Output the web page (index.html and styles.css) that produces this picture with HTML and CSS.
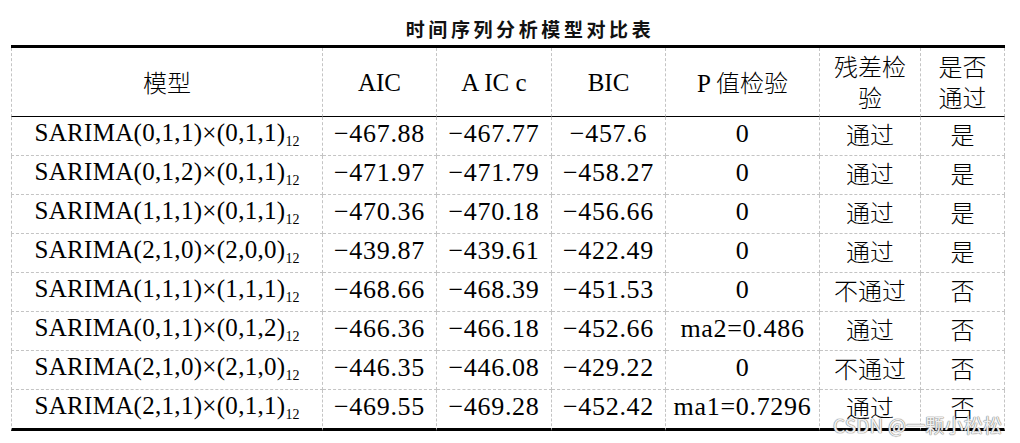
FILE: index.html
```html
<!DOCTYPE html>
<html lang="zh">
<head>
<meta charset="utf-8">
<title>时间序列分析模型对比表</title>
<link rel="stylesheet" href="styles.css">
</head>
<body>
<div class="page">
  <h1 class="title">时间序列分析模型对比表</h1>
  <table class="cmp">
    <thead>
      <tr>
        <th class="c-model"><span class="cjk">模型</span></th>
        <th class="c-aic">AIC</th>
        <th class="c-aicc">A IC c</th>
        <th class="c-bic">BIC</th>
        <th class="c-p">P <span class="cjk">值检验</span></th>
        <th class="c-res"><span class="cjk">残差检<br>验</span></th>
        <th class="c-pass"><span class="cjk">是否<br>通过</span></th>
      </tr>
    </thead>
    <tbody>
      <tr>
        <td class="model">SARIMA(0,1,1)×(0,1,1)<span class="sub">12</span></td>
        <td class="num">−467.88</td><td class="num">−467.77</td><td class="num">−457.6</td>
        <td class="num">0</td><td class="cjk">通过</td><td class="cjk">是</td>
      </tr>
      <tr>
        <td class="model">SARIMA(0,1,2)×(0,1,1)<span class="sub">12</span></td>
        <td class="num">−471.97</td><td class="num">−471.79</td><td class="num">−458.27</td>
        <td class="num">0</td><td class="cjk">通过</td><td class="cjk">是</td>
      </tr>
      <tr>
        <td class="model">SARIMA(1,1,1)×(0,1,1)<span class="sub">12</span></td>
        <td class="num">−470.36</td><td class="num">−470.18</td><td class="num">−456.66</td>
        <td class="num">0</td><td class="cjk">通过</td><td class="cjk">是</td>
      </tr>
      <tr>
        <td class="model">SARIMA(2,1,0)×(2,0,0)<span class="sub">12</span></td>
        <td class="num">−439.87</td><td class="num">−439.61</td><td class="num">−422.49</td>
        <td class="num">0</td><td class="cjk">通过</td><td class="cjk">是</td>
      </tr>
      <tr>
        <td class="model">SARIMA(1,1,1)×(1,1,1)<span class="sub">12</span></td>
        <td class="num">−468.66</td><td class="num">−468.39</td><td class="num">−451.53</td>
        <td class="num">0</td><td class="cjk">不通过</td><td class="cjk">否</td>
      </tr>
      <tr>
        <td class="model">SARIMA(0,1,1)×(0,1,2)<span class="sub">12</span></td>
        <td class="num">−466.36</td><td class="num">−466.18</td><td class="num">−452.66</td>
        <td class="num">ma2=0.486</td><td class="cjk">通过</td><td class="cjk">否</td>
      </tr>
      <tr>
        <td class="model">SARIMA(2,1,0)×(2,1,0)<span class="sub">12</span></td>
        <td class="num">−446.35</td><td class="num">−446.08</td><td class="num">−429.22</td>
        <td class="num">0</td><td class="cjk">不通过</td><td class="cjk">否</td>
      </tr>
      <tr class="last">
        <td class="model">SARIMA(2,1,1)×(0,1,1)<span class="sub">12</span></td>
        <td class="num">−469.55</td><td class="num">−469.28</td><td class="num">−452.42</td>
        <td class="num">ma1=0.7296</td><td class="cjk">通过</td><td class="cjk">否</td>
      </tr>
    </tbody>
  </table>
  <div class="watermark">CSDN @一颗小松松</div>
</div>
</body>
</html>
```

FILE: styles.css
```css
html, body {
  margin: 0;
  padding: 0;
  background: #ffffff;
}

.page {
  position: relative;
  width: 1020px;
  height: 443px;
  box-sizing: border-box;
  padding-left: 11px;
  color: #000;
}

.title {
  margin: 0;
  width: 994px;
  height: 45px;
  box-sizing: border-box;
  padding: 18px 0 0 44px;
  text-align: center;
  font-family: "Noto Sans CJK SC", sans-serif;
  font-weight: 700;
  font-size: 19px;
  line-height: 22px;
  letter-spacing: 3.6px;
  color: #111;
}

.cmp {
  width: 994px;
  table-layout: fixed;
  border-collapse: separate;
  border-spacing: 0;
  border-top: 3px solid #000;
  font-family: "Liberation Serif", "Noto Sans CJK SC", serif;
  font-weight: 400;
  color: #000;
}

.cmp th,
.cmp td {
  box-sizing: border-box;
  padding: 0;
  text-align: center;
  vertical-align: middle;
  border-right: 1px dashed #c4c4c4;
  border-bottom: 1px dashed #c4c4c4;
  white-space: nowrap;
}

.cmp th:first-child,
.cmp td:first-child {
  border-left: 1px dashed #c4c4c4;
}

.cmp th {
  height: 69px;
  font-weight: 400;
  font-size: 25px;
  line-height: 29px;
  border-bottom: 1px solid #000;
}

.cmp td {
  height: 39px;
  line-height: 28px;
  padding-bottom: 4px;
}

.cmp tr.last td {
  height: 41px;
  border-bottom: 3px solid #000;
}

.c-model { width: 312px; }
.c-aic { width: 114px; }
.c-aicc { width: 115px; }
.c-bic { width: 114px; }
.c-p { width: 154px; }
.c-res { width: 101px; }
.c-pass { width: 84px; }

.cjk {
  font-family: "Noto Sans CJK SC", sans-serif;
  font-weight: 300;
  font-size: 24px;
}

.model {
  font-size: 25px;
  letter-spacing: 0.3px;
}

.sub {
  font-size: 14px;
  line-height: 1;
  vertical-align: -5px;
  letter-spacing: 0;
}

.num {
  font-size: 26px;
  letter-spacing: 0.7px;
}

.watermark {
  position: absolute;
  left: 833px;
  top: 414px;
  font-family: "Noto Sans CJK SC", sans-serif;
  font-size: 19px;
  line-height: 22px;
  letter-spacing: 0.2px;
  color: rgba(255, 255, 255, 0.9);
  text-shadow: 0 0 1px #888, 0 0 1px #888, 0 0 1px #888;
  white-space: nowrap;
}
```
